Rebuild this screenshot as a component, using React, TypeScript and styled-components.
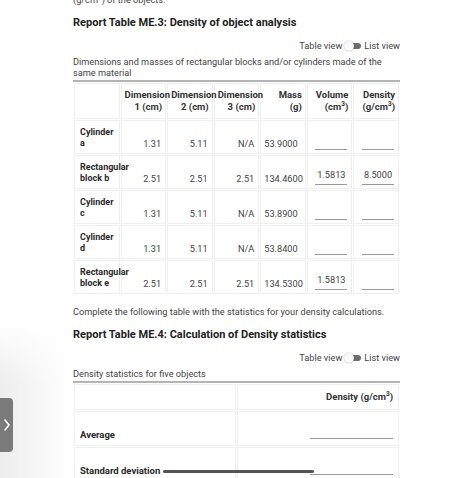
import styled, { createGlobalStyle } from "styled-components";

const GlobalStyle = createGlobalStyle`
  html, body {
    margin: 0;
    padding: 0;
    background: #ffffff;
  }
  body {
    font-family: Roboto, "Liberation Sans", Arial, sans-serif;
    color: #333333;
    overflow: hidden;
  }
`;

const rows = [
  { label: "Cylinder a", d1: "1.31", d2: "5.11", d3: "N/A", mass: "53.9000", vol: "", dens: "" },
  { label: "Rectangular block b", d1: "2.51", d2: "2.51", d3: "2.51", mass: "134.4600", vol: "1.5813", dens: "8.5000" },
  { label: "Cylinder c", d1: "1.31", d2: "5.11", d3: "N/A", mass: "53.8900", vol: "", dens: "" },
  { label: "Cylinder d", d1: "1.31", d2: "5.11", d3: "N/A", mass: "53.8400", vol: "", dens: "" },
  { label: "Rectangular block e", d1: "2.51", d2: "2.51", d3: "2.51", mass: "134.5300", vol: "1.5813", dens: "" },
];

function Toggle() {
  return (
    <ToggleRow>
      <span>Table view</span>
      <Switch>
        <Track />
        <Knob />
      </Switch>
      <span>List view</span>
    </ToggleRow>
  );
}

function Answer({ value }: { value: string }) {
  return <AnswerField>{value || "\u00a0"}</AnswerField>;
}

export default function App() {
  return (
    <Screen>
      <GlobalStyle />
      <Content>
        <ClippedLine>
          (g/cm<sup>3</sup>) of the objects.
        </ClippedLine>
        <Title>Report Table ME.3: Density of object analysis</Title>
        <Toggle />
        <Caption>
          Dimensions and masses of rectangular blocks and/or cylinders made of
          the same material
        </Caption>
        <DataTable>
          <thead>
            <tr>
              <Head />
              <Head>
                Dimension
                <br />1 (cm)
              </Head>
              <Head>
                Dimension
                <br />2 (cm)
              </Head>
              <Head>
                Dimension
                <br />3 (cm)
              </Head>
              <Head>
                Mass
                <br />
                (g)
              </Head>
              <Head>
                Volume
                <br />
                (cm<sup>3</sup>)
              </Head>
              <Head>
                Density
                <br />
                (g/cm<sup>3</sup>)
              </Head>
            </tr>
          </thead>
          <tbody>
            {rows.map((r) => (
              <tr key={r.label}>
                <Label>{r.label}</Label>
                <Cell>{r.d1}</Cell>
                <Cell>{r.d2}</Cell>
                <Cell>{r.d3}</Cell>
                <Cell $left>{r.mass}</Cell>
                <Cell $input>
                  <Answer value={r.vol} />
                </Cell>
                <Cell $input>
                  <Answer value={r.dens} />
                </Cell>
              </tr>
            ))}
          </tbody>
        </DataTable>

        <Paragraph>
          Complete the following table with the statistics for your density
          calculations.
        </Paragraph>
        <Title $second>Report Table ME.4: Calculation of Density statistics</Title>
        <Toggle />
        <Caption>Density statistics for five objects</Caption>
        <StatsTable>
          <tbody>
            <tr>
              <StatHead />
              <StatHead>
                Density (g/cm<sup>3</sup>)
              </StatHead>
            </tr>
            <tr>
              <StatLabel>Average</StatLabel>
              <StatCell>
                <StatAnswer />
              </StatCell>
            </tr>
            <tr>
              <StatLabel>Standard deviation</StatLabel>
              <StatCell>
                <StatAnswer />
              </StatCell>
            </tr>
          </tbody>
        </StatsTable>
      </Content>

      <Shade />
      <DrawerTab>
        <svg width="6" height="12" viewBox="0 0 6 12">
          <path d="M1 1 L5 6 L1 11" fill="none" stroke="#ffffff" strokeWidth="1.6" strokeLinecap="round" />
        </svg>
      </DrawerTab>
      <ScrollThumb />
    </Screen>
  );
}

const Screen = styled.div`
  position: relative;
  width: 474px;
  height: 478px;
  overflow: hidden;
  background: #ffffff;
`;

const Content = styled.div`
  width: 327px;
  margin-left: 73px;
  font-size: 9.2px;
  line-height: 11px;

  sup {
    font-size: 6.5px;
    line-height: 0;
    vertical-align: 4px;
  }
`;

const ClippedLine = styled.div`
  margin-top: -6px;
  height: 10px;
  color: #444444;
`;

const Title = styled.h2<{ $second?: boolean }>`
  margin: ${(p) => (p.$second ? "11px 0 0" : "12px 0 0")};
  font-size: 11px;
  line-height: 14px;
  font-weight: 700;
  color: #222222;
`;

const ToggleRow = styled.div`
  display: flex;
  justify-content: flex-end;
  align-items: center;
  gap: 2px;
  margin-top: 9.5px;
  height: 12px;
  color: #444444;
`;

const Switch = styled.span`
  position: relative;
  width: 18px;
  height: 10px;
  display: inline-block;
`;

const Track = styled.span`
  position: absolute;
  left: 4px;
  top: 2px;
  width: 13px;
  height: 6px;
  border-radius: 3px;
  background: #6e6e6e;
`;

const Knob = styled.span`
  position: absolute;
  left: 0;
  top: 0;
  width: 10px;
  height: 10px;
  border-radius: 50%;
  background: #fafafa;
  box-shadow: 0 0 1px 0.5px rgba(0, 0, 0, 0.18);
`;

const Caption = styled.div`
  margin-top: 4.5px;
  padding-bottom: 1.5px;
  border-bottom: 2px solid #b4b4b4;
  color: #444444;
`;

const DataTable = styled.table`
  width: 327px;
  border-collapse: separate;
  border-spacing: 1px;
  table-layout: fixed;
`;

const Head = styled.th`
  height: 29px;
  padding: 0 3px 5px;
  border: 1px solid #efefef;
  vertical-align: bottom;
  text-align: right;
  white-space: nowrap;
  font-weight: 700;
  font-size: 9.5px;
  line-height: 12px;
  color: #333333;
`;

const Label = styled.td`
  height: 28px;
  padding: 0 2px 4px 5px;
  border: 1px solid #efefef;
  vertical-align: bottom;
  font-weight: 700;
  font-size: 9px;
  line-height: 11px;
  color: #2a2a2a;
`;

const Cell = styled.td<{ $left?: boolean; $input?: boolean }>`
  padding: 0 ${(p) => (p.$left ? "2px" : "4px")} ${(p) => (p.$input ? "3px" : "4px")} 3px;
  border: 1px solid #efefef;
  vertical-align: bottom;
  text-align: ${(p) => (p.$left ? "left" : "right")};
  font-size: 9.2px;
  line-height: 11px;
  color: #444444;
  white-space: nowrap;
`;

const AnswerField = styled.div`
  display: block;
  width: 32px;
  margin-left: auto;
  text-align: center;
  padding-bottom: 4px;
  border-bottom: 1px solid #999999;
`;

const Paragraph = styled.p`
  margin: 11.5px 0 0;
  color: #444444;
`;

const StatsTable = styled.table`
  width: 327px;
  border-collapse: separate;
  border-spacing: 1px;
  table-layout: fixed;
`;

const StatHead = styled.th`
  height: 24px;
  padding: 0 5px;
  border: 1px solid #efefef;
  text-align: right;
  font-weight: 700;
  font-size: 9.5px;
  color: #333333;
`;

const StatLabel = styled.td`
  height: 28px;
  padding: 0 5px 5px;
  border: 1px solid #efefef;
  vertical-align: bottom;
  font-weight: 700;
  font-size: 9.5px;
  line-height: 11px;
  color: #2a2a2a;
`;

const StatCell = styled.td`
  padding: 0 5px 6px;
  border: 1px solid #efefef;
  vertical-align: bottom;
  text-align: right;
`;

const StatAnswer = styled.div`
  display: block;
  width: 83px;
  margin-left: auto;
  border-bottom: 1px solid #999999;
`;

const Shade = styled.div`
  position: absolute;
  left: 0;
  top: 320px;
  width: 70px;
  height: 158px;
  background: linear-gradient(to right, rgba(0, 0, 0, 0.07), rgba(0, 0, 0, 0));
  -webkit-mask-image: linear-gradient(to bottom, transparent, #000 40%);
  mask-image: linear-gradient(to bottom, transparent, #000 40%);
  pointer-events: none;
`;

const DrawerTab = styled.div`
  position: absolute;
  left: 0;
  top: 398px;
  width: 13px;
  height: 54px;
  border-radius: 0 4px 4px 0;
  background: #7a7a7a;
  display: flex;
  align-items: center;
  justify-content: center;
`;

const ScrollThumb = styled.div`
  position: absolute;
  left: 163px;
  top: 470px;
  width: 151px;
  height: 3px;
  border-radius: 2px;
  background: #555555;
`;
